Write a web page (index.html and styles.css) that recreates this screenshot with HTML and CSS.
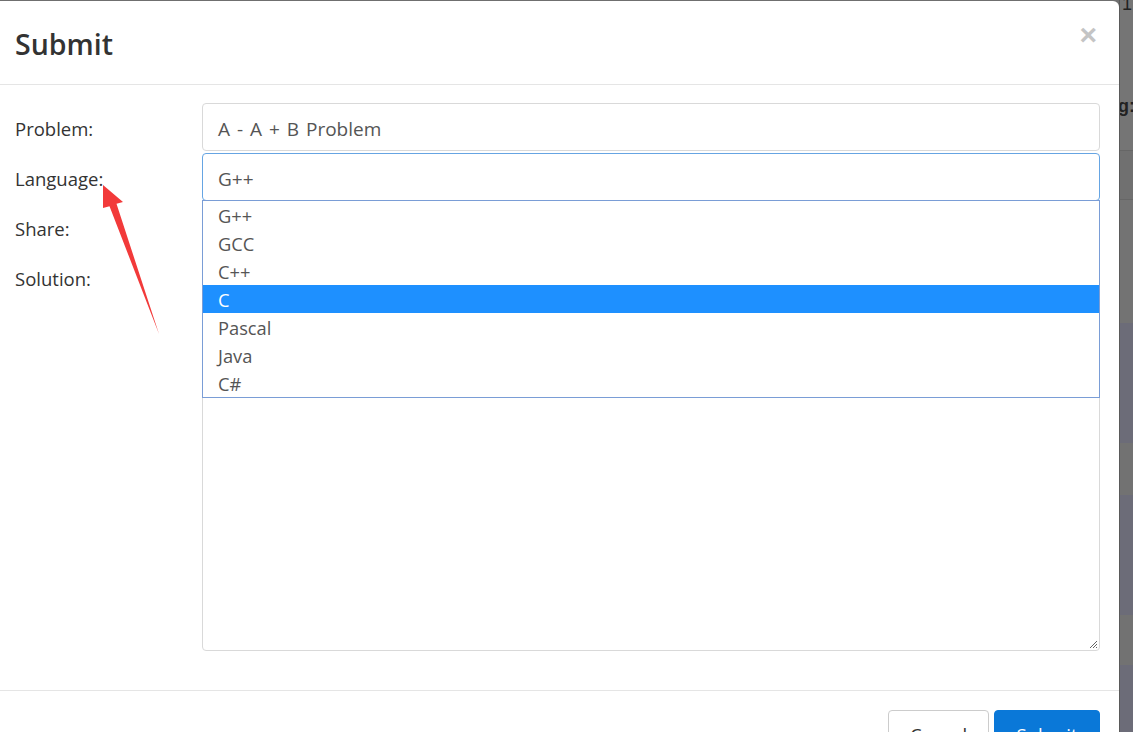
FILE: index.html
```html
<!DOCTYPE html>
<html lang="en">
<head>
<meta charset="utf-8">
<title>Submit</title>
<link rel="stylesheet" href="styles.css">
</head>
<body>
<div class="page">
  <div class="modal">
    <div class="modal-header">
      <h4 class="modal-title">Submit</h4>
      <button class="close" type="button">&times;</button>
    </div>
    <div class="modal-body">
      <div class="form">
        <label class="label">Problem:</label>
        <div class="control"><div class="input">A - A + B Problem</div></div>

        <label class="label">Language:</label>
        <div class="control select-wrap">
          <div class="input focused">G++</div>
          <ul class="listbox">
            <li>G++</li>
            <li>GCC</li>
            <li>C++</li>
            <li class="active">C</li>
            <li>Pascal</li>
            <li>Java</li>
            <li>C#</li>
          </ul>
        </div>

        <label class="label">Share:</label>
        <div class="control"><div class="input"></div></div>

        <label class="label">Solution:</label>
        <div class="control">
          <div class="textarea">
            <svg class="grip" width="10" height="10" viewBox="0 0 10 10"><path d="M9 2 L2 9 M9 5 L5 9 M9 8 L8 9" stroke="#666" stroke-width="1"/></svg>
          </div>
        </div>
      </div>
    </div>
    <div class="modal-footer">
      <button class="btn btn-default" type="button">Cancel</button>
      <button class="btn btn-primary" type="button">Submit</button>
    </div>
  </div>
  <div class="backdrop">
    <div class="band b1"><span class="peek one">1</span><span class="peek g">g:</span></div>
    <div class="band b2"></div>
    <div class="band b3"></div>
    <div class="band b4"></div>
    <div class="band b5"></div>
    <div class="band b6"></div>
    <div class="band b7"></div>
    <div class="band b8"></div>
  </div>
  <svg class="arrow" width="1133" height="732" viewBox="0 0 1133 732">
    <polygon points="103,185 123,202 116.5,203.8 159,334 109.5,206.3 103,208" fill="#f23a3a"/>
  </svg>
</div>
</body>
</html>
```

FILE: styles.css
```css
* { box-sizing: border-box; }
html, body { margin: 0; padding: 0; }
body {
  background: #6f6f6f;
  font-family: "Open Sans", "Noto Sans", "Liberation Sans", sans-serif;
  color: #333;
  overflow: hidden;
}
.page {
  position: relative;
  width: 1133px;
  height: 732px;
  display: flex;
  align-items: flex-start;
  overflow: hidden;
}
.modal {
  width: 1119px;
  flex: none;
  margin-top: 1px;
  background: #fff;
  border-top-right-radius: 6px;
  height: 800px;
}
.modal-header {
  height: 84px;
  border-bottom: 1px solid #e5e5e5;
  display: flex;
  align-items: center;
  justify-content: space-between;
  padding: 0 20px 0 15px;
}
.modal-title {
  margin: 0;
  font-size: 28.5px;
  font-weight: 600;
  color: #333;
  padding-top: 2px;
}
.close {
  border: 0;
  background: none;
  padding: 0;
  font-family: "Liberation Sans", sans-serif;
  font-size: 30px;
  font-weight: bold;
  color: #c4c4c4;
  line-height: 1;
  margin-bottom: 16px;
  margin-right: 2px;
}
.modal-body {
  padding: 18px 19px 39px 15px;
}
.form {
  display: grid;
  grid-template-columns: 187px 1fr;
  row-gap: 2px;
}
.label {
  font-size: 18.5px;
  line-height: 44px;
  padding-top: 4px;
  height: 48px;
  color: #333;
}
.control { position: relative; }
.input {
  height: 48px;
  border: 1px solid #d9d9d9;
  border-radius: 4px;
  padding: 3px 15px 0;
  font-size: 19px;
  word-spacing: 2px;
  line-height: 44px;
  color: #555;
}
.input.focused {
  border-color: #66a5e3;
}
.listbox {
  position: absolute;
  top: 47px;
  left: 0;
  width: 898px;
  margin: 0;
  padding: 0;
  list-style: none;
  background: #fff;
  border: 1px solid #7a9dd6;
  z-index: 2;
}
.listbox li {
  height: 28px;
  line-height: 26px;
  padding: 2px 0 0 15px;
  font-size: 18.3px;
  color: #555;
}
.listbox li.active {
  background: #1e90ff;
  color: #fff;
}
.textarea {
  position: relative;
  height: 398px;
  border: 1px solid #d9d9d9;
  border-radius: 4px;
  background: #fff;
}
.grip {
  position: absolute;
  right: 1px;
  bottom: 1px;
}
.modal-footer {
  border-top: 1px solid #e5e5e5;
  padding: 19px 19px 0 0;
  display: flex;
  justify-content: flex-end;
  gap: 5px;
}
.btn {
  height: 48px;
  border-radius: 4px;
  font-family: inherit;
  font-size: 18.5px;
  padding: 0 18px;
}
.btn-default {
  width: 101px;
  background: #fff;
  border: 1px solid #cccccc;
  color: #333;
}
.btn-primary {
  width: 106px;
  background: #0a78d8;
  border: 1px solid #0a78d8;
  color: #fff;
}
.backdrop {
  flex: 1;
  height: 732px;
  display: flex;
  flex-direction: column;
  border-left: 1px solid #5a5a5a;
}
.band { flex: none; position: relative; overflow: hidden; }
.b1 { height: 150px; background: #757575; }
.b2 { height: 50px; background: #707070; border-top: 1px solid #666; border-bottom: 1px solid #666; }
.b3 { height: 123px; background: #737373; }
.b4 { height: 120px; background: #6c6c78; }
.b5 { height: 52px; background: #727272; }
.b6 { height: 120px; background: #6c6c78; }
.b7 { height: 50px; background: #727272; }
.b8 { height: 67px; background: #6c6c78; }
.peek {
  position: absolute;
  font-family: "Liberation Sans", sans-serif;
  color: #222;
  font-weight: bold;
  font-size: 18px;
}
.one { top: -6px; left: 2px; font-weight: normal; }
.g { top: 96px; left: -2px; }
.arrow {
  position: absolute;
  left: 0;
  top: 0;
  pointer-events: none;
  z-index: 5;
}
```
